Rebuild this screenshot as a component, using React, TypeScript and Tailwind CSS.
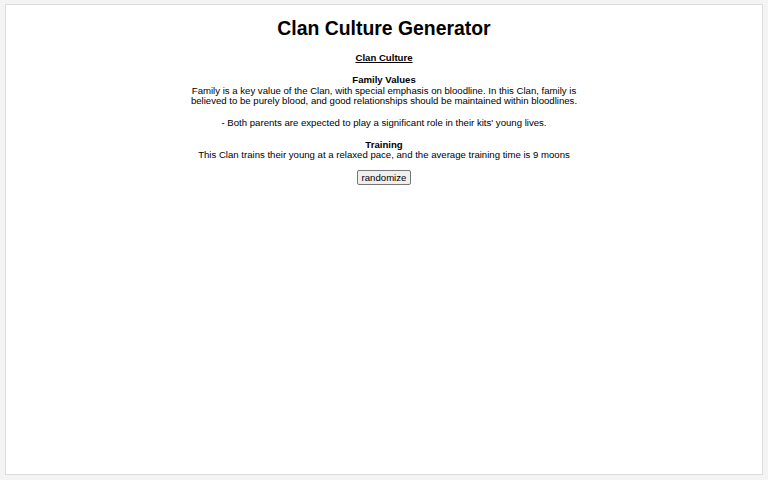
export default function App() {
  return (
    <div
      className="min-h-screen bg-[#f4f4f4] pt-[4px] px-[5px] pb-[5px]"
      style={{ fontFamily: '"Liberation Sans", Arial, sans-serif' }}
    >
      <div className="h-[471px] border border-[#dcdcdc] bg-white pt-[12px] text-center text-black">
        <h1 className="text-[19.4px] font-bold leading-[22.3px]">Clan Culture Generator</h1>
        <div className="mt-[14px] text-[9.6px] leading-[10.8px]">
          <div className="font-bold underline">Clan Culture</div>
          <div className="mt-[10.8px] font-bold">Family Values</div>
          <div>
            Family is a key value of the Clan, with special emphasis on bloodline. In this Clan, family is
            <br />
            believed to be purely blood, and good relationships should be maintained within bloodlines.
          </div>
          <div className="mt-[10.8px]">
            - Both parents are expected to play a significant role in their kits&apos; young lives.
          </div>
          <div className="mt-[10.8px] font-bold">Training</div>
          <div>This Clan trains their young at a relaxed pace, and the average training time is 9 moons</div>
        </div>
        <button
          type="button"
          className="mt-[9px] h-[15px] rounded-[2px] border border-[#767676] bg-[#efefef] px-[4px] text-[9.6px] leading-[13px] text-black"
        >
          randomize
        </button>
      </div>
    </div>
  );
}
